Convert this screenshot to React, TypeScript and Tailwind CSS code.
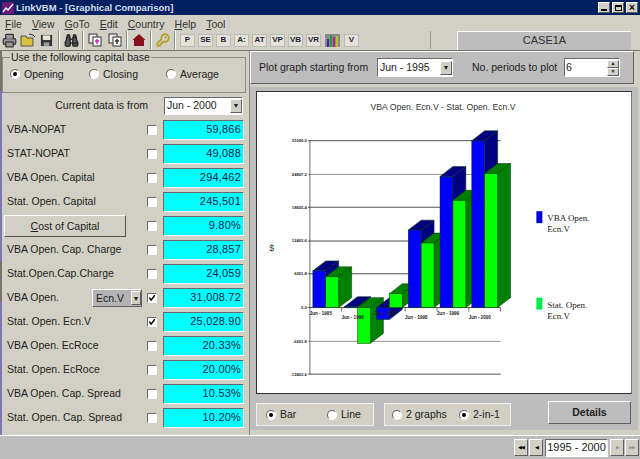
import type { ReactNode } from 'react';
import { Binoculars, KeyRound, Printer } from 'lucide-react';

const raised = 'border border-t-white border-l-white border-r-[#5f5f5f] border-b-[#5f5f5f]';
const sunken = 'border border-t-[#6a6a6a] border-l-[#6a6a6a] border-r-white border-b-white';

const rows = [
  { label: 'VBA-NOPAT', value: '59,866' },
  { label: 'STAT-NOPAT', value: '49,088' },
  { label: 'VBA Open. Capital', value: '294,462' },
  { label: 'Stat. Open. Capital', value: '245,501' },
  { label: 'Cost of Capital', value: '9.80%', button: true },
  { label: 'VBA Open. Cap. Charge', value: '28,857' },
  { label: 'Stat.Open.Cap.Charge', value: '24,059' },
  { label: 'VBA Open.', value: '31,008.72', checked: true, select: true },
  { label: 'Stat. Open. Ecn.V', value: '25,028.90', checked: true },
  { label: 'VBA Open. EcRoce', value: '20.33%' },
  { label: 'Stat. Open. EcRoce', value: '20.00%' },
  { label: 'VBA Open. Cap. Spread', value: '10.53%' },
  { label: 'Stat. Open. Cap. Spread', value: '10.20%' },
];

const letterButtons = ['P', 'SE', 'B', 'A:', 'AT', 'VP', 'VB', 'VR'];

// [x, blue top, blue bottom, green top, green bottom]
const bars = [
  [312, 271, 308, 277, 308],
  [344, 307, 308, 308, 344],
  [376, 308, 320, 294, 308],
  [408, 230, 308, 243, 308],
  [440, 176, 308, 200, 308],
  [472, 140, 308, 173, 308],
];

const gridLines = [
  { y: 140, label: '31009.0' },
  { y: 174, label: '24807.2' },
  { y: 207, label: '18605.4' },
  { y: 241, label: '12403.6' },
  { y: 274, label: '6201.8' },
  { y: 308, label: '0.0' },
  { y: 342, label: '-6201.8' },
  { y: 375, label: '-12403.6' },
];

const xLabels = [
  { x: 320, y: 315, t: 'Jun - 1995' },
  { x: 352, y: 320, t: 'Jun - 1996' },
  { x: 385, y: 315, t: 'Jun - 1997' },
  { x: 416, y: 320, t: 'Jun - 1998' },
  { x: 448, y: 315, t: 'Jun - 1999' },
  { x: 480, y: 320, t: 'Jun - 2000' },
];

function Bar3D({ x, w, top, bottom, front, side }: { x: number; w: number; top: number; bottom: number; front: string; side: string }) {
  const dx = 13;
  const dy = 10;
  return (
    <g stroke="#003000" strokeWidth="0.5">
      <polygon points={`${x},${top} ${x + dx},${top - dy} ${x + w + dx},${top - dy} ${x + w},${top}`} fill={side} />
      <polygon points={`${x + w},${top} ${x + w + dx},${top - dy} ${x + w + dx},${bottom - dy} ${x + w},${bottom}`} fill={side} />
      <rect x={x} y={top} width={w} height={bottom - top} fill={front} />
    </g>
  );
}

function Chart() {
  return (
    <svg viewBox="256 91 376 303" className="h-full w-full">
      <text x="443" y="109" textAnchor="middle" fontSize="8.7" fill="#333" fontFamily="Liberation Sans">
        VBA Open. Ecn.V - Stat. Open. Ecn.V
      </text>
      <text x="268" y="251" fontSize="9" fill="#333" fontFamily="Liberation Sans">$</text>
      {gridLines.map((g) => (
        <g key={g.y}>
          <line x1="307" x2="501" y1={g.y} y2={g.y} stroke={g.y === 174 || g.y === 342 ? '#777' : '#222'} strokeWidth="0.8" />
          <text x="306" y={g.y + 1.5} textAnchor="end" fontSize="4.2" fontWeight="bold" fill="#222" fontFamily="Liberation Sans">
            {g.label}
          </text>
        </g>
      ))}
      <line x1="309" x2="309" y1="140" y2="375" stroke="#444" strokeWidth="0.8" />
      {[341, 373, 405, 437, 469, 501].map((x) => (
        <line key={x} x1={x} x2={x} y1="308" y2="312" stroke="#333" strokeWidth="0.7" />
      ))}
      {bars.slice(0, 3).map((b) => (
        <g key={b[0]}>
          <Bar3D x={b[0]} w={13} top={b[1]} bottom={b[2]} front="#0000ff" side="#000080" />
          <Bar3D x={b[0] + 13} w={13} top={b[3]} bottom={b[4]} front="#00ff00" side="#008000" />
        </g>
      ))}
      {xLabels.map((l) => (
        <text key={l.t} x={l.x} y={l.y} textAnchor="middle" fontSize="4.6" fontWeight="bold" fill="#222" fontFamily="Liberation Sans">
          {l.t}
        </text>
      ))}
      {bars.slice(3).map((b) => (
        <g key={b[0]}>
          <Bar3D x={b[0]} w={13} top={b[1]} bottom={b[2]} front="#0000ff" side="#000080" />
          <Bar3D x={b[0] + 13} w={13} top={b[3]} bottom={b[4]} front="#00ff00" side="#008000" />
        </g>
      ))}
      <rect x="537" y="211" width="6" height="12" fill="#0000e0" />
      <rect x="537" y="298" width="6" height="12" fill="#00ee44" />
      <g fontSize="9" fill="#222" fontFamily="Liberation Serif">
        <text x="548" y="221">VBA Open.</text>
        <text x="548" y="232">Ecn.V</text>
        <text x="548" y="308">Stat. Open.</text>
        <text x="548" y="320">Ecn.V</text>
      </g>
    </svg>
  );
}

function Radio({ on, label, className = '' }: { on?: boolean; label: string; className?: string }) {
  return (
    <label className={`flex items-center gap-[4px] whitespace-nowrap ${className}`}>
      <span className="flex h-[10px] w-[10px] items-center justify-center rounded-full border border-t-[#666] border-l-[#666] border-r-white border-b-white bg-white">
        {on && <span className="h-[4px] w-[4px] rounded-full bg-black" />}
      </span>
      {label}
    </label>
  );
}

function Check({ on }: { on?: boolean }) {
  return (
    <span className={`flex h-[10px] w-[10px] items-center justify-center bg-white ${sunken}`}>
      {on && (
        <svg viewBox="0 0 10 10" className="h-[8px] w-[8px]">
          <path d="M1.5 4.5 L4 7.5 L8.5 1.5" fill="none" stroke="#000" strokeWidth="1.8" />
        </svg>
      )}
    </span>
  );
}

function Arrow({ className = '' }: { className?: string }) {
  return <span className={`flex items-center justify-center bg-[#d2d0c4] text-[7px] leading-none ${raised} ${className}`}>▼</span>;
}

function Select({ value, className = '' }: { value: string; className?: string }) {
  return (
    <div className={`flex items-center whitespace-nowrap bg-white pl-[2px] ${sunken} ${className}`}>
      <span className="flex-1">{value}</span>
      <Arrow className="h-[14px] w-[12px]" />
    </div>
  );
}

function Tool({ children }: { children: ReactNode }) {
  return <span className="flex h-[16px] w-[16px] items-center justify-center">{children}</span>;
}

function Sep() {
  return <span className="mx-[3px] h-[18px] w-[2px] border-l border-r border-l-[#8a8a80] border-r-white" />;
}

function CopyIcon({ color }: { color: string }) {
  return (
    <svg viewBox="0 0 14 14" className="h-[14px] w-[14px]">
      <rect x="1" y="1" width="8" height="9" fill="#eee" stroke="#333" />
      <rect x="5" y="4" width="8" height="9" fill="#fff" stroke="#333" />
      <path d="M7 8h4M9 6v5" stroke={color} strokeWidth="1.4" />
    </svg>
  );
}

function NavBtn({ glyph, dim }: { glyph: string; dim?: boolean }) {
  return (
    <span className={`flex h-[17px] w-[14px] items-center justify-center bg-[#d2d0c4] text-[5px] tracking-[-1px] ${raised} ${dim ? 'text-[#999]' : 'text-black'}`}>
      {glyph}
    </span>
  );
}

export default function App() {
  return (
    <div className="flex h-[459px] w-[640px] flex-col overflow-hidden bg-[#d2d0c4] text-[10.5px] leading-none text-[#222] [font-family:'Liberation_Sans',sans-serif]">
      {/* Title bar */}
      <div className="flex h-[15px] items-center bg-[#01205f] pl-[2px] pr-[2px] text-white">
        <span className="mr-[2px] flex h-[12px] w-[12px] items-center justify-center bg-[#6a1a7a]">
          <svg viewBox="0 0 12 12" className="h-[12px] w-[12px]">
            <path d="M1 10 L4 6 L6 8 L11 2" fill="none" stroke="#fff" strokeWidth="1.3" />
          </svg>
        </span>
        <span className="flex-1 text-[9.5px] font-bold text-[#d8dff0]">LinkVBM - [Graphical Comparison]</span>
        <div className="flex gap-[2px]">
          <span className={`flex h-[11px] w-[12px] items-end justify-center bg-[#d2d0c4] pb-[1px] ${raised}`}>
            <span className="h-[2px] w-[6px] bg-black" />
          </span>
          <span className={`flex h-[11px] w-[12px] items-center justify-center bg-[#d2d0c4] ${raised}`}>
            <span className="h-[6px] w-[7px] border border-t-2 border-black" />
          </span>
          <span className={`flex h-[11px] w-[12px] items-center justify-center bg-[#d2d0c4] text-[10px] font-bold text-black ${raised}`}>×</span>
        </div>
      </div>

      {/* Menu */}
      <div className="flex h-[15px] items-center gap-[10px] pl-[5px] pt-[3px] text-[#333]">
        {[
          ['F', 'ile'],
          ['V', 'iew'],
          ['G', 'oTo'],
          ['E', 'dit'],
          ['C', 'ountry'],
          ['H', 'elp'],
          ['T', 'ool'],
        ].map(([u, r]) => (
          <span key={r}>
            <span className="underline">{u}</span>
            {r}
          </span>
        ))}
      </div>

      {/* Toolbar */}
      <div className="flex h-[21px] items-center border-b border-[#77756a] pl-[1px]">
        <Tool><Printer size={15} fill="#999" color="#333" /></Tool>
        <span className="w-[3px]" />
        <Tool>
          <svg viewBox="0 0 16 14" className="h-[14px] w-[16px]">
            <path d="M1 3h5l1 2h6v8H1z" fill="#d8c040" stroke="#555" />
            <path d="M9 1l4 1 2 2" fill="none" stroke="#333" />
          </svg>
        </Tool>
        <span className="w-[2px]" />
        <Tool>
          <svg viewBox="0 0 14 14" className="h-[13px] w-[13px]">
            <rect x="1" y="1" width="12" height="12" fill="#333" />
            <rect x="3" y="1.5" width="8" height="5" fill="#e8e8d8" />
            <rect x="4" y="9" width="6" height="4" fill="#999" />
          </svg>
        </Tool>
        <span className="w-[1px]" />
        <Sep />
        <Tool><Binoculars size={15} color="#222" fill="#555" /></Tool>
        <Sep />
        <Tool><CopyIcon color="#c020c0" /></Tool>
        <span className="w-[4px]" />
        <Tool><CopyIcon color="#333" /></Tool>
        <Sep />
        <Tool>
          <svg viewBox="0 0 14 14" className="h-[14px] w-[14px]">
            <path d="M0.5 7 L7 1 L13.5 7 L12 7 L12 13 L2 13 L2 7 Z" fill="#8b0f1a" />
          </svg>
        </Tool>
        <Sep />
        <Tool><KeyRound size={14} color="#b8a020" strokeWidth={3} /></Tool>
        <Sep />
        <div className="flex gap-[3px] pl-[1px]">
          {letterButtons.map((b) => (
            <span key={b} className="flex h-[13px] w-[15px] items-center justify-center border border-[#bdbbb0] bg-[#e4e2d8] text-[8px] font-bold text-[#223]">
              {b}
            </span>
          ))}
          <span className="mx-[1px] flex h-[13px] w-[15px] items-end justify-center gap-[1px] bg-[#8a8a90]">
            <span className="h-[8px] w-[2px] bg-[#4020c0]" />
            <span className="h-[12px] w-[2px] bg-[#20a020]" />
            <span className="h-[10px] w-[2px] bg-[#c02080]" />
            <span className="h-[11px] w-[2px] bg-[#c0c020]" />
          </span>
          <span className="flex h-[13px] w-[15px] items-center justify-center border border-[#bdbbb0] bg-[#e4e2d8] text-[8px] font-bold text-[#223]">V</span>
        </div>
        <span className="ml-[71px] h-[18px] w-[1px] bg-[#9a988e]" />
        <div className="ml-[26px] flex h-[19px] w-[174px] items-center justify-center border-l border-t border-white bg-[#bdbdbd] text-[11px] text-[#333]">
          CASE1A
        </div>
      </div>

      {/* Body */}
      <div className="flex flex-1">
        {/* Left column */}
        <div className="flex w-[250px] border-r border-[#8a8a80]">
          <div className="flex w-[2px] flex-col">
            <span className="h-[40px] bg-[#77756a]" />
            <span className="h-[170px] bg-[#7a78b8]" />
            <span className="h-[40px] bg-[#77756a]" />
            <span className="flex-1 bg-[#7a78b8]" />
          </div>
          <div className="flex-1 pr-[3px] pt-[1px]">
            <fieldset className="h-[41px] border border-[#8e8c82] pl-[6px]">
              <legend className="ml-[1px] px-[1px]">Use the following capital base</legend>
              <div className="flex pl-[1px] pt-[6px]">
                <Radio on label="Opening" className="w-[79px]" />
                <Radio label="Closing" className="w-[77px]" />
                <Radio label="Average" />
              </div>
            </fieldset>
            <div className="flex h-[24px] items-center justify-end pr-[3px] pt-[1px]">
              <span className="mr-[16px]">Current data is from</span>
              <Select value="Jun - 2000" className="h-[18px] w-[79px]" />
            </div>
            <div className="pt-[1px]">
              {rows.map((r) => (
                <div key={r.label} className="flex h-[24px] items-center">
                  <div className="flex w-[145px] items-center whitespace-nowrap pl-[5px]">
                    {r.button ? (
                      <button className="-ml-[3px] h-[22px] w-[122px] border-[1.5px] border-t-white border-l-white border-r-[#55554d] border-b-[#55554d] bg-[#d2d0c4]">
                        <span className="underline">C</span>ost of Capital
                      </button>
                    ) : (
                      <span className="pb-[2px]">{r.label}</span>
                    )}
                    {r.select && (
                      <div className={`ml-[33px] flex h-[18px] w-[50px] items-center bg-[#b4b4b4] pl-[3px] ${raised}`}>
                        <span className="flex-1">Ecn.V</span>
                        <Arrow className="h-[14px] w-[10px]" />
                      </div>
                    )}
                  </div>
                  <Check on={r.checked} />
                  <span className="w-[6px]" />
                  <div className={`flex h-[20px] w-[81px] justify-end bg-[#00ffff] pr-[2px] pt-[3px] text-[11px] tracking-[0.2px] text-[#224] ${sunken}`}>
                    {r.value}
                  </div>
                </div>
              ))}
            </div>
          </div>
        </div>

        {/* Right column */}
        <div className="flex flex-1 flex-col pr-[2px]">
          <div className={`mr-[4px] flex h-[33px] items-center whitespace-nowrap border bg-[#bdbdbd] pl-[8px] ${raised}`}>
            <span className="w-[108px]">Plot graph starting from</span>
            <Select value="Jun - 1995" className="ml-[10px] h-[19px] w-[76px]" />
            <span className="ml-[19px] w-[84px]">No. periods to plot</span>
            <div className={`ml-[8px] flex h-[19px] w-[56px] items-center bg-white pl-[1px] ${sunken}`}>
              <span className="flex-1">6</span>
              <div className="flex flex-col">
                <span className={`flex h-[8px] w-[12px] items-center justify-center bg-[#d2d0c4] text-[5px] ${raised}`}>▲</span>
                <span className={`flex h-[8px] w-[12px] items-center justify-center bg-[#d2d0c4] text-[5px] ${raised}`}>▼</span>
              </div>
            </div>
          </div>
          <div className="mt-[3px] flex h-[343px] flex-col bg-[#bdbdbd] px-[6px] pt-[4px]">
            <div className="h-[303px] border border-t-[#333] border-l-[#333] border-r-[#777] border-b-[#333] bg-white">
              <Chart />
            </div>
            <div className="flex items-start pt-[9px]">
              <div className="flex h-[23px] w-[118px] items-center border border-[#eeeeee] bg-[#d2d0c4] pl-[9px]">
                <Radio on label="Bar" className="w-[61px]" />
                <Radio label="Line" />
              </div>
              <div className="ml-[10px] flex h-[23px] w-[127px] items-center border border-[#eeeeee] bg-[#d2d0c4] pl-[7px]">
                <Radio label="2 graphs" className="w-[67px]" />
                <Radio on label="2-in-1" />
              </div>
              <button className={`ml-[37px] -mt-[2px] h-[23px] w-[83px] bg-[#bdbdbd] font-bold ${raised}`}>Details</button>
            </div>
          </div>
        </div>
      </div>

      {/* Status bar */}
      <div className="flex h-[24px] items-center justify-end gap-[1px] border-t border-white bg-[#bdbdbd] pr-[1px]">
        <NavBtn glyph="◀◀" />
        <NavBtn glyph="◀" />
        <div className={`mx-[1px] flex h-[18px] w-[63px] items-center justify-center whitespace-nowrap bg-white text-[11px] ${sunken}`}>1995 - 2000</div>
        <NavBtn glyph="▶" dim />
        <NavBtn glyph="▶▶" dim />
      </div>
    </div>
  );
}
